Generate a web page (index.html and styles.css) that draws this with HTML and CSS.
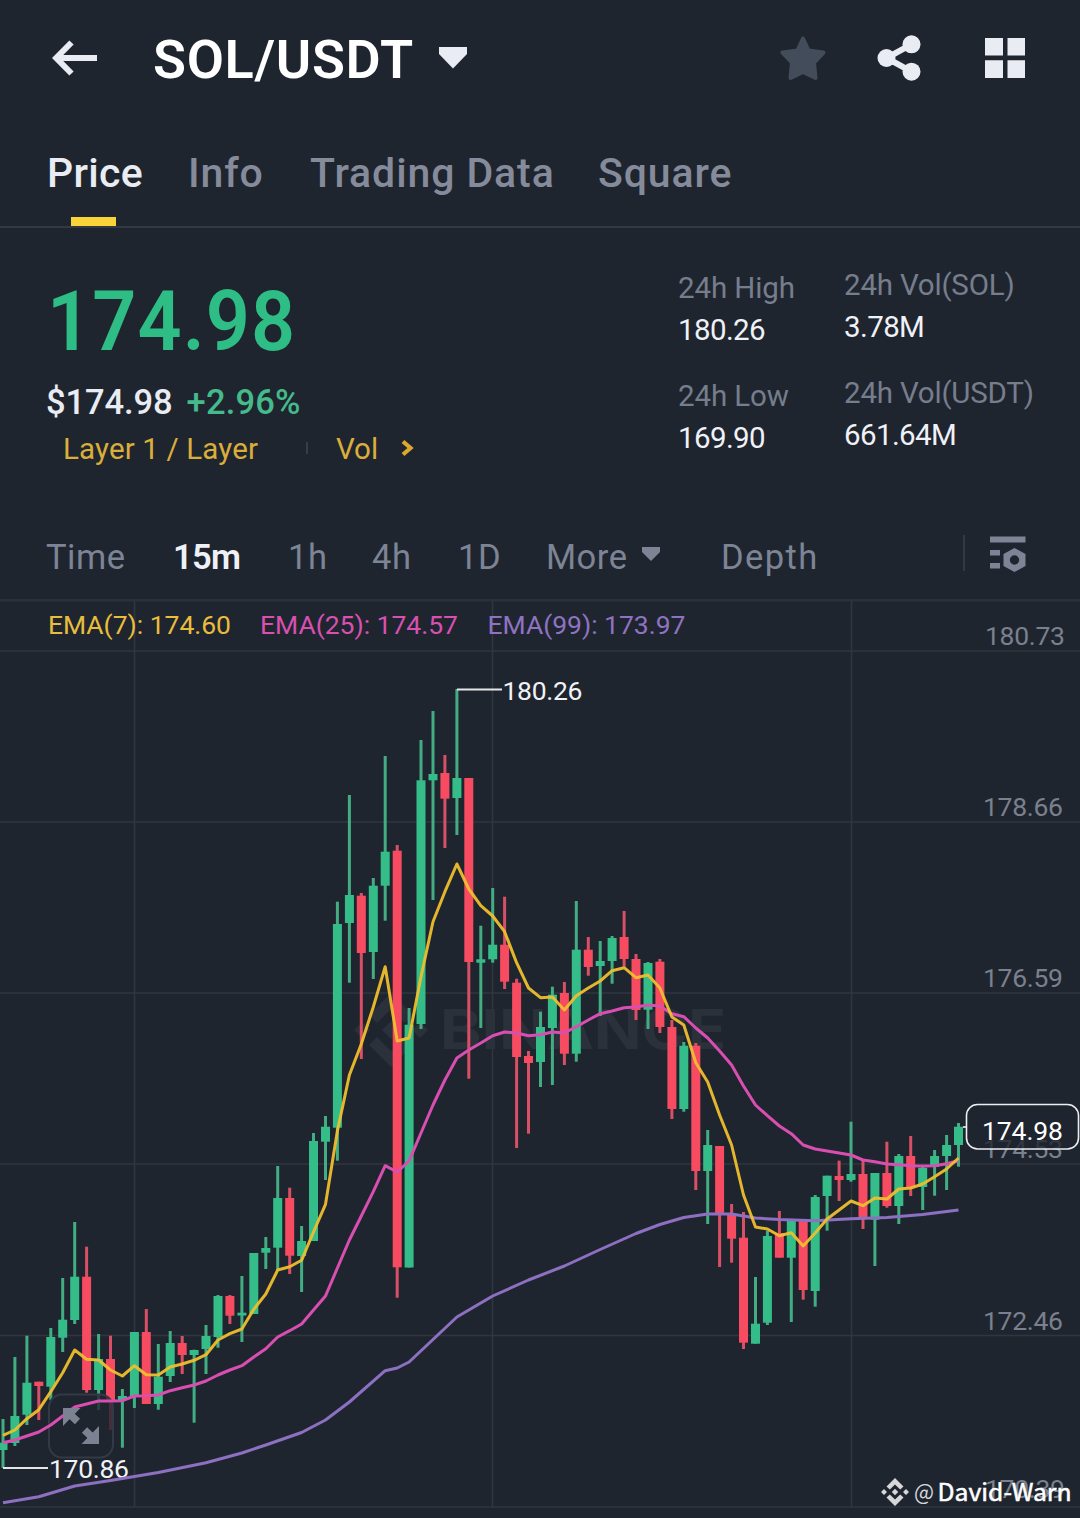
FILE: index.html
```html
<!DOCTYPE html>
<html lang="en">
<head>
<meta charset="utf-8">
<title>SOL/USDT</title>
<link rel="stylesheet" href="styles.css">
</head>
<body>
<div class="app">
  <header class="topbar">
    <svg class="back" width="46" height="36" viewBox="0 0 46 36"><path d="M3 18H45M19.500 2.500L4.200 18L19.500 33.500" fill="none" stroke="#eaecf3" stroke-width="6"/></svg>
    <h1 class="pair">SOL/USDT</h1>
    <svg class="pair-caret" width="28" height="22" viewBox="0 0 28 22"><path d="M0 0H28V7L14 21.500L0 7Z" fill="#eaecf3"/></svg>
    <div class="actions">
      <svg width="46" height="46" viewBox="0 0 46 46"><path d="M23 3.500L28.600 15.500L43.500 17.500L34 27.500L35.500 43L23 37L10.500 43L12 27.500L2.500 17.500L17.400 15.500Z" fill="#434c5a" stroke="#434c5a" stroke-width="4" stroke-linejoin="round"/></svg>
      <svg width="44" height="46" viewBox="0 0 44 46"><g fill="#eaecf3"><circle cx="9.500" cy="23" r="9"/><circle cx="34.500" cy="9.300" r="9"/><circle cx="34.500" cy="36.700" r="9"/></g><path d="M34.500 9.300L9.500 23L34.500 36.700" fill="none" stroke="#eaecf3" stroke-width="6"/></svg>
      <svg width="40" height="40" viewBox="0 0 40 40"><path d="M0 0H18V17.500H0ZM22.500 0H40V17.500H22.500ZM0 22.300H18V40H0ZM22.500 22.300H40V40H22.500Z" fill="#eaecf3"/></svg>
    </div>
  </header>

  <nav class="tabs">
    <span class="tab active">Price</span>
    <span class="tab">Info</span>
    <span class="tab">Trading Data</span>
    <span class="tab">Square</span>
  </nav>

  <section class="summary">
    <div class="quote">
      <div class="last">174.98</div>
      <div class="change"><span class="fiat">$174.98</span><span class="pct">+2.96%</span></div>
      <div class="tags">
        <span class="tag-layer">Layer 1 / Layer</span>
        <i class="tag-sep"></i>
        <span class="tag-vol">Vol</span>
        <svg width="13" height="18" viewBox="0 0 13 18"><path d="M2 2.500L9.500 9L2 15.500" fill="none" stroke="#dba92f" stroke-width="4.200"/></svg>
      </div>
    </div>
    <div class="stats">
      <dl><dt>24h High</dt><dd>180.26</dd></dl>
      <dl><dt>24h Low</dt><dd>169.90</dd></dl>
    </div>
    <div class="stats stats-vol">
      <dl><dt>24h Vol(SOL)</dt><dd>3.78M</dd></dl>
      <dl><dt>24h Vol(USDT)</dt><dd>661.64M</dd></dl>
    </div>
  </section>

  <nav class="intervals">
    <span>Time</span>
    <span class="on">15m</span>
    <span>1h</span>
    <span>4h</span>
    <span>1D</span>
    <span>More</span>
    <svg class="more-caret" width="18" height="14" viewBox="0 0 18 14"><path d="M0 0H18V5L9 14L0 5Z" fill="#7d8495"/></svg>
    <span class="depth">Depth</span>
    <i class="int-sep"></i>
    <svg class="settings" width="36" height="36" viewBox="0 0 36 36"><path d="M0 0.500H35.500V6.500H0ZM0 14H10V19.500H0ZM0 27H10V32.500H0Z" fill="#7d8495"/><path fill-rule="evenodd" d="M24.500 12L35.500 18V30L24.500 36L13.500 30V18ZM24.500 19.300A4.700 4.700 0 1 0 24.500 28.700A4.700 4.700 0 1 0 24.500 19.300Z" fill="#7d8495"/></svg>
  </nav>

  <svg class="chart" id="chart" width="1080" height="919" viewBox="0 599 1080 919">
    <g class="grid">
      <path class="grid-top" d="M0 600H1080"/>
      <path d="M0 651H1080M0 822H1080M0 993H1080M0 1164H1080M0 1335.500H1080M0 1507H1080M134.500 601V1507M492.500 601V1507M851.500 601V1507"/>
    </g>
    <g class="brand">
      <text x="440" y="1049" font-size="55" textLength="286" lengthAdjust="spacingAndGlyphs">BINANCE</text>
      <g transform="translate(391 1030)"><path d="M-22 -15L0 -37L22 -15L14 -7L0 -21L-14 -7ZM-22 15L0 37L22 15L14 7L0 21L-14 7ZM-37 0L-29 -8L-21 0L-29 8ZM37 0L29 -8L21 0L29 8ZM0 -9L9 0L0 9L-9 0Z"/></g>
    </g>
    <g id="candles"></g>
    <rect class="expand-box" x="49" y="1394.500" width="64" height="63" rx="13"/>
    <g class="axis">
      <text x="985" y="644.500" textLength="80">180.73</text>
      <text x="983" y="815.500" textLength="80">178.66</text>
      <text x="983" y="986.500" textLength="80">176.59</text>
      <text x="983" y="1158" textLength="80">174.53</text>
      <text x="983" y="1329.500" textLength="80">172.46</text>
      <text x="985" y="1498" textLength="80">170.39</text>
    </g>
    <g class="legend">
      <text x="48" y="633.500" fill="#e9bd3c" textLength="183">EMA(7): 174.60</text>
      <text x="260" y="633.500" fill="#d950b0" textLength="198">EMA(25): 174.57</text>
      <text x="487.500" y="633.500" fill="#8f73c2" textLength="198">EMA(99): 173.97</text>
    </g>
    <g class="extremes">
      <path d="M457 689.500H502M3 1468H48"/>
      <text x="502.500" y="699.500" textLength="80">180.26</text>
      <text x="49" y="1478" textLength="80">170.86</text>
    </g>
    <g id="averages"></g>
    <g class="last-tag">
      <path d="M963 1127H966"/>
      <rect x="966.500" y="1104.500" width="112" height="44.500" rx="11"/>
      <text x="982" y="1140" textLength="81">174.98</text>
    </g>
    <g class="expand-arrows">
      <path d="M63 1408H80.500L63 1426ZM99 1444H81.500L99 1426Z"/>
      <path class="shaft" d="M69 1413.500L77.500 1421.500M84.500 1430L94 1439"/>
    </g>
    <g class="author">
      <g transform="translate(895 1492)"><path d="M-8.500 -5.500L0 -14L8.500 -5.500L5.200 -2.400L0 -7.600L-5.200 -2.400ZM-8.500 5.500L0 14L8.500 5.500L5.200 2.400L0 7.600L-5.200 2.400ZM-14 0L-11 -3L-8 0L-11 3ZM14 0L11 -3L8 0L11 3ZM0 -3.200L3.200 0L0 3.200L-3.200 0Z"/></g>
      <text class="at" x="914" y="1500" textLength="20" lengthAdjust="spacingAndGlyphs">@</text>
      <text x="937.500" y="1501" textLength="134" lengthAdjust="spacingAndGlyphs">David-Warn</text>
    </g>
  </svg>
</div>
<script src="chart.js"></script>
</body>
</html>
```
FILE: styles.css
```css
* { box-sizing: border-box; margin: 0; padding: 0; }

body {
  background: #1f252f;
  color: #eaecf3;
  font-family: Roboto, "Liberation Sans", sans-serif;
}

.app { width: 1080px; height: 1518px; overflow: hidden; display: flex; flex-direction: column; }
svg { display: block; flex: none; }

.topbar { height: 117px; display: flex; align-items: center; padding: 0 55px 1px 52px; }
.pair { margin-left: 55px; width: 286px; font-size: 54px; font-weight: 600; line-height: 64px; letter-spacing: 0.7px; color: #fff; padding-top: 3px; }
.actions { margin-left: auto; display: flex; align-items: center; gap: 51px; }
.actions svg:last-child { margin-left: 13px; }

.tabs { height: 111px; border-bottom: 2px solid #323943; display: grid; grid-template-columns: 141px 122px 288px auto; padding-left: 47px; font-size: 41px; font-weight: 500; color: #858b9a; }
.tab { position: relative; height: 109px; line-height: 112px; letter-spacing: 0.9px; white-space: nowrap; }
.tabs .active { color: #eaecf3; letter-spacing: 0.3px; }
.active::after { content: ""; position: absolute; left: 24px; bottom: 0; width: 45px; height: 9px; background: #f8d33a; }

.summary { height: 271px; display: grid; grid-template-columns: 631px 166px auto; padding-left: 47px; }
.last { margin-top: 44px; height: 103px; font-size: 84px; line-height: 100px; font-weight: 600; color: #2ebd85; letter-spacing: 1.2px; transform: scaleX(0.92); transform-origin: 0 0; }
.change { height: 50px; display: flex; gap: 14px; font-size: 34.5px; line-height: 54px; font-weight: 500; margin-left: -1px; }
.fiat { letter-spacing: -0.1px; }
.pct { color: #45ba8a; letter-spacing: 0.2px; }
.tags { height: 46px; display: flex; align-items: center; padding-left: 16px; color: #dbae3b; font-size: 29.5px; line-height: 46px; }
.tag-layer { width: 243px; letter-spacing: 0.15px; padding-top: 2px; }
.tag-sep { width: 2px; height: 12px; background: #363d49; margin-right: 28px; }
.tag-vol { width: 65px; padding-top: 2px; }

.stats { padding-top: 39px; font-size: 29.5px; line-height: 42px; white-space: nowrap; }
.stats-vol { padding-top: 36px; }
.stats dl { height: 108px; }
.stats dt { color: #767d8c; letter-spacing: -0.1px; }
.stats-vol dt { letter-spacing: -0.2px; }
.stats dd { color: #eff1f7; letter-spacing: -0.6px; }

.intervals { height: 100px; display: grid; grid-template-columns: 127px 115px 84px 86px 88px 96px 79px 242px 27px 36px; align-items: center; padding-left: 46px; font-size: 34.5px; color: #7d8495; letter-spacing: 0.5px; }
.intervals span { line-height: 116px; }
.intervals .on { color: #eff1f7; font-weight: 600; letter-spacing: -0.7px; }
.intervals .depth { letter-spacing: 1.4px; }
.int-sep { width: 2px; height: 36px; background: #323943; margin-bottom: 8px; }
.more-caret { margin-bottom: 7px; }
.settings { margin-bottom: 6px; }

.chart text { font-size: 26.5px; }
.grid path { fill: none; stroke: #303640; stroke-width: 1.6; }
.grid .grid-top { stroke: #2b313b; stroke-width: 3; }
.brand { fill: #2b313b; }
.brand text { font-size: 55px; font-weight: 700; font-family: Inter, sans-serif; }
.up { fill: #34bd88; }
.down { fill: #f64b61; }
.up .wick { fill: #42ad83; }
.down .wick { fill: #d94f65; }
#averages path { fill: none; stroke-width: 3; stroke-linejoin: round; }
#averages .ema7 { stroke: #f0bf2e; stroke-opacity: 0.94; }
#averages .ema25 { stroke: #d94fb1; }
#averages .ema99 { stroke: #8d70c1; }
.axis { fill: #7a808d; }
.extremes { fill: #f1f2f6; }
.extremes path { stroke: #e4e6ea; stroke-width: 2; }
.last-tag rect { fill: #1f252f; fill-opacity: 0.8; stroke: #eceef2; stroke-width: 1.6; }
.last-tag path { stroke: #eceef2; stroke-width: 1.6; }
.last-tag text { fill: #fff; }
.expand-box { fill: #1f252f; fill-opacity: 0.8; stroke: #343a45; stroke-width: 2; }
.expand-arrows { fill: #7b8291; }
.expand-arrows .shaft { fill: none; stroke: #7b8291; stroke-width: 7.5; }
.author { fill: #d5d7da; }
.chart .author text { fill: #fff; font-size: 24px; font-family: "Noto Sans CJK SC", sans-serif; font-weight: 400; stroke: #fff; stroke-width: 0.5; }
.chart .author .at { fill: #d5d7da; font-size: 22px; stroke: none; }
```
FILE: chart.js
```js
// Each candle: direction, high, body top, body bottom, low (in chart units).
const candles = [
  ['u',1419,1442.7,1450,1468],['u',1357,1416,1443,1446],['u',1335.7,1382.7,1414.7,1425],['d',1381.7,1381.7,1386,1420],
  ['u',1328,1337,1386.7,1400],['u',1278,1319.7,1337.7,1352],['u',1222,1276.7,1320,1324],['d',1246.7,1276.7,1390,1392.7],
  ['u',1334,1359,1390,1410],['d',1335.7,1359,1400,1430],['u',1389,1396,1400,1447.7],['u',1332,1332,1396.7,1408],
  ['d',1309,1332,1404,1404],['u',1344,1376.7,1404,1409.7],['u',1331,1343,1376,1382],['d',1336,1343,1355,1374],
  ['u',1349.7,1350,1355,1422.7],['u',1325,1336,1349,1374],['u',1295,1296,1337,1347.7],['d',1295,1296,1315.7,1324],
  ['u',1276,1312.7,1315.5,1342],['u',1253,1253,1314,1314],['u',1237,1248,1252.7,1269],['u',1166,1198,1247.7,1270.7],
  ['d',1187.7,1198,1255.7,1274],['u',1226,1241,1256,1292],['u',1133,1141,1241,1241],['u',1116,1126.7,1141.7,1180],
  ['u',901.7,924,1127.7,1160.7],['u',795,895,923,982.7],['d',893,895.7,953,1059],['u',878,885.7,952,979],
  ['u',756,851.7,885.7,920.7],['d',845,850.7,1267.3,1297.7],['u',1008,1024.7,1267.5,1267.5],['u',740,780.3,1024,1029],
  ['u',711,774,780.3,900],['d',755,773,798.7,848],['u',689,778,798,835],['d',778,778,962,1078.7],
  ['u',925.7,959.3,962.7,1028],['u',888,944.7,959.3,962.7],['d',896.7,944.7,981.7,989],['d',978.7,982.7,1057,1148],
  ['d',1051,1056,1063,1133.7],['u',1011.7,1027,1062,1087],['u',986.7,994.7,1028,1085],['d',982,993,1053.7,1065],
  ['u',901,949.7,1053.7,1061.7],['d',937,949.7,967,975.7],['u',941,961,966,1016],['u',936,938,961,983.7],
  ['d',911,937,959,966.7],['d',954,959,1010,1020],['u',962,963,1009.7,1029],['d',959,961.7,1027,1033],
  ['d',1020,1027,1109,1119],['u',1042,1045.7,1109,1111.7],['d',1043,1045.7,1171,1190],['u',1130,1145,1171,1224],
  ['d',1146,1146,1213,1267],['d',1204,1214,1238.7,1262.7],['d',1212,1237.7,1342.7,1349],['u',1277,1323.7,1343.7,1343.7],
  ['u',1230.7,1236,1322.7,1325],['d',1211,1233,1257.7,1257.7],['u',1220.7,1221,1257.7,1322],['d',1221,1221,1290,1299.7],
  ['u',1195,1197,1291,1306.7],['u',1175.7,1175.7,1196,1230.7],['d',1160.7,1176,1180,1201],['u',1121.7,1174,1180,1181.7],
  ['d',1159,1174,1219,1229],['u',1173,1173,1219.7,1266],['d',1141.7,1173,1206,1207.7],['u',1154,1156,1206,1224],
  ['d',1136,1156,1187,1196],['u',1166,1167.7,1187,1210],['u',1150,1156,1167,1195.7],['u',1135,1145,1156,1190],
  ['u',1123,1126.7,1145,1166.7]
];
const ema7 = [1435.3,1430,1418.7,1409.7,1391.7,1372.7,1350,1359.3,1360,1370,1376,1365.7,1374.7,1375,1367,1364,1360.3,1354.7,1340,1333.7,1329,1309.3,1294,1270,1266.7,1260.3,1232,1204.3,1131,1075,1044,1007,966.7,1041,1038,976.7,921.7,891.7,864,889,905.7,916,931.7,962.7,988,997.7,997,1010,995.7,988,981,970.7,967.7,977.7,975,988,1017,1025,1062.7,1082,1115,1145,1195,1227,1229,1235.7,1232.7,1246,1233,1219,1210,1201,1205.7,1198,1199,1189,1188,1184,1176.7,1169,1158];
const ema25 = [1442.7,1440,1436,1432,1425,1416,1407,1404,1401,1401,1400.7,1396,1395.7,1395,1390.7,1387.7,1385,1381,1375,1370,1365.7,1357,1348.7,1337,1330.7,1324,1310,1296,1268,1240,1216,1191.7,1165.7,1172,1161,1133,1105,1080,1058,1050,1043,1035.7,1032,1033,1035.7,1034.7,1032,1033,1026.7,1020,1013.7,1011,1007.7,1007,1005,1006,1013.7,1016.7,1028,1038,1051,1065,1086,1105,1115.7,1126,1133.7,1145,1149,1151,1153,1155,1160,1161.7,1164,1164.7,1165.7,1166,1165.7,1163.7,1160.7];
// Slow average as [candle index, y] pairs.
const ema99 = [[0,1502.7],[3,1496.7],[6,1486],[9,1480.5],[13,1472.5],[17,1462.7],[20,1453],[22,1445],[25,1432.5],[27,1420],[29,1402],[32,1370.7],[33,1368],[34,1362],[36,1339.5],[38,1317],[41,1296],[44,1280],[47,1266],[50,1249.5],[53,1233.5],[55,1224.5],[57,1217.5],[59,1214],[61,1214],[63,1218],[65,1219.5],[68,1220.7],[71,1218.7],[74,1217.5],[77,1214.5],[80,1210]];

const x = i => 3 + i * 11.944;
document.getElementById('candles').innerHTML = candles.map(([dir, hi, top, bot, lo], i) =>
  `<g class="${dir === 'u' ? 'up' : 'down'}"><rect class="wick" x="${(x(i) - 1.5).toFixed(1)}" y="${hi}" width="3" height="${(lo - hi).toFixed(1)}"/>` +
  `<rect x="${(x(i) - 4.5).toFixed(1)}" y="${top}" width="9" height="${(bot - top).toFixed(1)}"/></g>`).join('');

const line = pts => 'M' + pts.map(([i, y]) => `${x(i).toFixed(1)} ${y}`).join('L');
const pairs = ys => ys.map((y, i) => [i, y]);
document.getElementById('averages').innerHTML =
  `<path class="ema99" d="${line(ema99)}"/><path class="ema25" d="${line(pairs(ema25))}"/><path class="ema7" d="${line(pairs(ema7))}"/>`;
```
